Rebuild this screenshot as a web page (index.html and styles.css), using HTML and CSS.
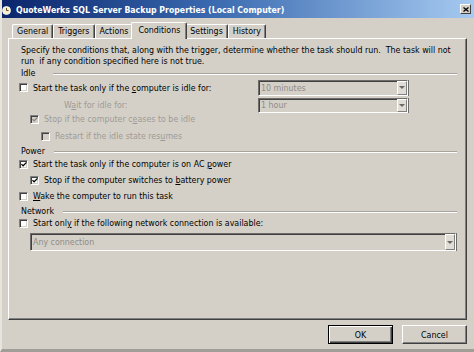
FILE: index.html
```html
<!DOCTYPE html>
<html>
<head>
<meta charset="utf-8">
<link rel="stylesheet" href="styles.css">
</head>
<body>
<div class="window">
  <header class="titlebar">
    <svg class="app-icon" width="9" height="9" viewBox="0 0 9 9"><circle cx="4.5" cy="4.5" r="4" fill="#f4eccc" stroke="#ffffff" stroke-width="0.8"/><path d="M4.5 2 V4.5 H6.5" fill="none" stroke="#5a4a20" stroke-width="1"/></svg>
    <span class="title">QuoteWerks SQL Server Backup Properties (Local Computer)</span>
    <span class="close"><svg width="6" height="5" viewBox="0 0 6 5"><path d="M0.5 0.5 L5.5 4.5 M5.5 0.5 L0.5 4.5" stroke="#000" stroke-width="1.3"/></svg></span>
  </header>
  <div class="client">
    <nav class="tabs">
      <span class="tab">General</span>
      <span class="tab">Triggers</span>
      <span class="tab">Actions</span>
      <span class="tab active">Conditions</span>
      <span class="tab">Settings</span>
      <span class="tab">History</span>
    </nav>
    <section class="panel">
      <p class="intro">Specify the conditions that, along with the trigger, determine whether the task should run.&nbsp; The task will not<br>run&nbsp; if any condition specified here is not true.</p>

      <div class="group-hdr g-idle"><span class="g-label">Idle</span><span class="g-line"></span></div>
      <div class="row r-idle">
        <span class="chk"><span class="box"></span></span>
        <span class="lbl">Start the task only if the <u>c</u>omputer is idle for:</span>
        <span class="combo disabled"><span class="combo-text">10 minutes</span><span class="combo-btn"><span class="arrow"></span></span></span>
      </div>
      <div class="row r-wait">
        <span class="lbl disabled-text wait-lbl">W<u>a</u>it for idle for:</span>
        <span class="combo disabled"><span class="combo-text">1 hour</span><span class="combo-btn"><span class="arrow"></span></span></span>
      </div>
      <div class="row r-stop lvl1">
        <span class="chk"><span class="box disabled checked"><svg width="7" height="7" viewBox="0 0 7 7"><path d="M0.5 3 L2.5 5 L6.5 1" fill="none" stroke="#8a8782" stroke-width="1.4"/></svg></span></span>
        <span class="lbl disabled-text">Stop if the computer c<u>e</u>ases to be idle</span>
      </div>
      <div class="row r-restart lvl2">
        <span class="chk"><span class="box disabled"></span></span>
        <span class="lbl disabled-text">Restart if the idle state res<u>u</u>mes</span>
      </div>

      <div class="group-hdr g-power"><span class="g-label">Power</span><span class="g-line"></span></div>
      <div class="row r-ac">
        <span class="chk"><span class="box checked"><svg width="7" height="7" viewBox="0 0 7 7"><path d="M0.5 3 L2.5 5 L6.5 1" fill="none" stroke="#000" stroke-width="1.4"/></svg></span></span>
        <span class="lbl">Start the task only if the computer is on AC <u>p</u>ower</span>
      </div>
      <div class="row r-batt lvl1">
        <span class="chk"><span class="box checked"><svg width="7" height="7" viewBox="0 0 7 7"><path d="M0.5 3 L2.5 5 L6.5 1" fill="none" stroke="#000" stroke-width="1.4"/></svg></span></span>
        <span class="lbl">Stop if the computer switches to <u>b</u>attery power</span>
      </div>
      <div class="row r-wake">
        <span class="chk"><span class="box"></span></span>
        <span class="lbl"><u>W</u>ake the computer to run this task</span>
      </div>

      <div class="group-hdr g-net"><span class="g-label">Network</span><span class="g-line"></span></div>
      <div class="row r-net">
        <span class="chk"><span class="box"></span></span>
        <span class="lbl">Start onl<u>y</u> if the following network connection is available:</span>
      </div>
      <div class="row r-conn">
        <span class="combo disabled wide"><span class="combo-text">Any connection</span><span class="combo-btn"><span class="arrow"></span></span></span>
      </div>
    </section>
    <div class="buttons">
      <span class="btn default">OK</span>
      <span class="btn">Cancel</span>
    </div>
  </div>
</div>
</body>
</html>
```

FILE: styles.css
```css
* { box-sizing: border-box; }
html, body { margin: 0; padding: 0; background: #d4d0c8; }
body {
  font-family: "DejaVu Sans Condensed", "DejaVu Sans", sans-serif;
  font-size: 8.8px;
  color: #000;
}
u { text-decoration: underline; text-underline-offset: 1px; }

.window {
  width: 474px;
  height: 352px;
  background: #d4d0c8;
  border-left: 2px solid #e6e4de;
  border-bottom: 3px solid #a19e98;
  display: flex;
  flex-direction: column;
  overflow: hidden;
}

.titlebar {
  height: 18px;
  margin-left: -2px;
  display: flex;
  align-items: center;
  background: linear-gradient(to right, #0a246a 0%, #3a6ab0 45%, #a6caf0 100%);
  color: #fff;
  padding-left: 2px;
  padding-right: 3px;
}
.app-icon { flex: none; margin-right: 5px; margin-top: 2px; }
.title { font-weight: bold; font-size: 8.7px; flex: 1; white-space: nowrap; margin-top: 1px; }
.close {
  width: 11px;
  height: 10px;
  background: #d4d0c8;
  border-top: 1px solid #fff;
  border-left: 1px solid #fff;
  border-right: 1px solid #404040;
  border-bottom: 1px solid #404040;
  display: flex;
  align-items: center;
  justify-content: center;
}

.client {
  flex: 1;
  display: flex;
  flex-direction: column;
  padding: 4px 7px 0 6px;
}

.tabs {
  display: flex;
  align-items: flex-end;
  height: 16px;
  padding-left: 4px;
  position: relative;
  z-index: 1;
}
.tab {
  height: 14px;
  padding: 0 4px;
  line-height: 13px;
  border-top: 1px solid #fff;
  border-left: 1px solid #fff;
  border-right: 1px solid #404040;
  box-shadow: inset -1px 0 0 #808080;
  border-radius: 2px 2px 0 0;
  white-space: nowrap;
}
.tab.active {
  height: 17px;
  margin: 0 -2px 0 0;
  padding: 0 6px;
  line-height: 15px;
  background: #d4d0c8;
  margin-bottom: -1px;
  position: relative;
}
.tab + .tab.active { margin-left: -2px; }

.panel {
  height: 282px;
  border-top: 1px solid #fff;
  border-left: 1px solid #fff;
  border-right: 1px solid #404040;
  border-bottom: 1px solid #404040;
  box-shadow: inset -1px -1px 0 #808080;
  padding: 6px 9px 0 10px;
}

.intro {
  margin: 0 0 0 2px;
  line-height: 11px;
  height: 22px;
  white-space: nowrap;
}

.group-hdr {
  display: flex;
  align-items: center;
  height: 12px;
  padding-left: 2px;
}
.g-label { min-width: 32px; padding-right: 9px; white-space: nowrap; }
.g-line {
  flex: 1;
  height: 2px;
  border-top: 1px solid #a7a49e;
  border-bottom: 1px solid #fff;
  margin-top: 2px;
}
.g-power { margin-top: 2px; }
.g-net { margin-top: 3px; }

.row {
  display: flex;
  align-items: center;
  height: 12px;
  white-space: nowrap;
}
.lvl1 { padding-left: 11px; }
.lvl2 { padding-left: 22px; }

.chk { width: 14px; flex: none; display: flex; align-items: center; }
.box {
  width: 9px;
  height: 9px;
  background: #fff;
  border-top: 1px solid #808080;
  border-left: 1px solid #808080;
  border-right: 1px solid #fff;
  border-bottom: 1px solid #fff;
  box-shadow: inset 1px 1px 0 #404040, inset -1px -1px 0 #d4d0c8;
  display: flex;
  align-items: center;
  justify-content: center;
}
.box.disabled { background: #d4d0c8; }
.box svg { margin-left: 1px; margin-top: 1px; }

.disabled-text { color: #9e9b95; }

.r-idle { height: 17px; margin-top: 0; }
.r-wait { height: 16px; margin-top: 1px; }
.wait-lbl { padding-left: 45px; }
.r-stop { height: 12px; }
.r-restart { height: 14px; margin-top: 4px; }
.r-ac { margin-top: 1px; }
.r-batt { margin-top: 4px; }
.r-wake { margin-top: 4px; }
.r-net { margin-top: 0; }
.r-conn { height: 18px; margin-top: 4px; padding-left: 11px; }

.combo {
  display: flex;
  align-items: center;
  height: 16px;
  border-top: 1px solid #6e6c68;
  border-left: 1px solid #6e6c68;
  border-right: 1px solid #fff;
  border-bottom: 1px solid #fff;
  box-shadow: inset 1px 1px 0 #404040, 1px 0 0 #6e6c68;
  background: #d4d0c8;
  color: #8f8c87;
}
.r-idle .combo, .r-wait .combo { width: 150px; margin-left: auto; margin-right: 49px; }
.r-wait .combo { height: 15px; }
.combo.wide { flex: 1; height: 18px; margin-right: 1px; }
.combo-text { flex: 1; padding-left: 2px; }
.combo-btn {
  width: 10px;
  height: 100%;
  border-top: 1px solid #fff;
  border-left: 1px solid #fff;
  border-right: 1px solid #808080;
  border-bottom: 1px solid #808080;
  background: #e0ddd6;
  display: flex;
  align-items: center;
  justify-content: center;
}
.arrow {
  width: 0;
  height: 0;
  border-left: 3px solid transparent;
  border-right: 3px solid transparent;
  border-top: 3px solid #6a6864;
}

.buttons {
  display: flex;
  justify-content: flex-end;
  gap: 9px;
  margin-top: 5px;
  padding-right: 0;
}
.btn {
  width: 65px;
  height: 19px;
  display: flex;
  align-items: center;
  justify-content: center;
  border-top: 1px solid #fff;
  border-left: 1px solid #fff;
  border-right: 1px solid #404040;
  border-bottom: 1px solid #404040;
  box-shadow: inset -1px -1px 0 #808080;
}
.btn.default {
  border: 1px solid #000;
  box-shadow: inset 1px 1px 0 #fff, inset -1px -1px 0 #404040, inset -2px -2px 0 #808080;
}
```
